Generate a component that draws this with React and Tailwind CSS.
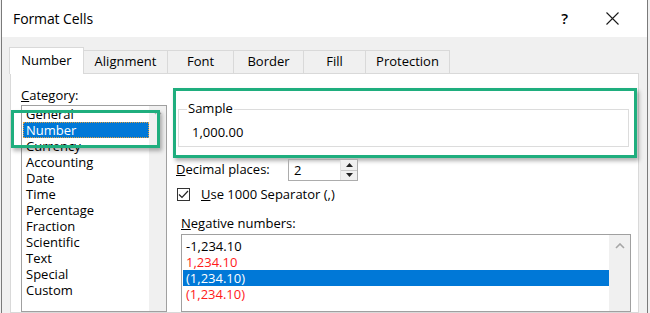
import React from 'react';

const categories = [
  'General', 'Number', 'Currency', 'Accounting', 'Date', 'Time', 'Percentage',
  'Fraction', 'Scientific', 'Text', 'Special', 'Custom',
];

const tabs = ['Alignment', 'Font', 'Border', 'Fill', 'Protection'];
const tabWidths = ['w-[84px]', 'w-[66px]', 'w-[70px]', 'w-[62px]', 'w-[84px]'];

const negatives = [
  { text: '-1,234.10', cls: 'text-black' },
  { text: '1,234.10', cls: 'text-[#ff1a1a]' },
  { text: '(1,234.10)', cls: 'bg-[#0078d7] text-white', selected: true },
  { text: '(1,234.10)', cls: 'text-[#ff1a1a]' },
];

const ChevronUp = () => (
  <svg width="10" height="6" viewBox="0 0 10 6" fill="none">
    <path d="M1 5 L5 1 L9 5" stroke="#a6a6a6" strokeWidth="1.6" />
  </svg>
);

const App = () => {
  return (
    <div
      className="w-[650px] h-[313px] overflow-hidden bg-[#f0f0f0] text-black"
      style={{ fontFamily: '"Open Sans", "Noto Sans", sans-serif' }}
    >
      <div className="relative h-full ml-[1px] w-[647px] border-x border-[#7a7a7a] flex flex-col">

        {/* Title bar */}
        <div className="h-[37px] shrink-0 bg-white flex items-center justify-between pl-[11px] pr-[28px]">
          <span className="text-[14px] tracking-[-0.1px]">Format Cells</span>
          <div className="flex items-center gap-[38px]">
            <span className="text-[15px] font-semibold">?</span>
            <svg width="13" height="13" viewBox="0 0 13 13">
              <path d="M0.5 0.5 L12.5 12.5 M12.5 0.5 L0.5 12.5" stroke="#1a1a1a" strokeWidth="1.1" />
            </svg>
          </div>
        </div>

        {/* Tabs */}
        <div className="flex items-end pl-[7px] pt-[10px] h-[36px] shrink-0 text-[13px]">
          <div className="w-[75px] h-[27px] bg-white border border-b-0 border-[#d9d9d9] flex items-center justify-center relative z-10 -mb-[1px]">
            Number
          </div>
          {tabs.map((t, i) => (
            <div
              key={t}
              className={`${tabWidths[i]} h-[23px] border border-l-0 border-b-0 border-[#d9d9d9] flex items-center justify-center`}
            >
              {t}
            </div>
          ))}
        </div>

        {/* Panel */}
        <div className="flex-1 ml-[8px] mr-[8px] bg-white border border-[#d9d9d9] flex pl-[10px] pt-[13px] text-[13px]">

          {/* Category */}
          <div className="w-[146px] shrink-0 flex flex-col">
            <div className="h-[17px] leading-[17px]"><u>C</u>ategory:</div>
            <div className="mt-[1px] flex-1 border border-[#a0a0a0] flex">
              <div className="flex-1 pl-[1px] flex flex-col leading-[16px]">
                {categories.map((c) => (
                  <div
                    key={c}
                    className={`h-[16px] pl-[3px] ${c === 'Number' ? 'bg-[#0078d7] text-white outline outline-1 outline-dotted outline-[#e0a040] -outline-offset-1' : ''}`}
                  >
                    {c}
                  </div>
                ))}
              </div>
              <div className="w-[17px] bg-[#f0f0f0] flex justify-center pt-[4px]">
                <svg width="8" height="5" viewBox="0 0 8 5"><path d="M1 4 L4 1 L7 4" stroke="#b0b0b0" strokeWidth="1.3" fill="none" /></svg>
              </div>
            </div>
          </div>

          {/* Right side */}
          <div className="flex-1 ml-[6px] flex flex-col pt-[1px]">
            {/* Sample highlight box */}
            <div className="h-[70px] mr-[1px] border-[3px] border-[#1fae7e] shadow-[2px_3px_4px_rgba(0,0,0,0.3)] pl-[2px] pr-[5px] pt-[18px]">
              <div className="relative h-[38px] border border-[#dcdcdc]">
                <span className="absolute -top-[10px] left-[8px] bg-white px-[1px] leading-[17px]">Sample</span>
                <div className="pl-[13px] pt-[14px] leading-[17px]">1,000.00</div>
              </div>
            </div>

            {/* Decimal places */}
            <div className="flex items-center pl-[3px] mt-[1px] h-[22px]">
              <span className="w-[112px]"><u>D</u>ecimal places:</span>
              <div className="w-[70px] h-[22px] border border-[#acacac] flex">
                <span className="flex-1 pl-[5px] leading-[20px]">2</span>
                <div className="w-[17px] flex flex-col border-l border-[#e0e0e0]">
                  <div className="flex-1 bg-[#f0f0f0] border-b border-[#c8c8c8] flex items-center justify-center">
                    <svg width="7" height="4" viewBox="0 0 7 4"><path d="M0 4 L3.5 0 L7 4 Z" fill="#222" /></svg>
                  </div>
                  <div className="flex-1 bg-[#f0f0f0] flex items-center justify-center">
                    <svg width="7" height="4" viewBox="0 0 7 4"><path d="M0 0 L3.5 4 L7 0 Z" fill="#222" /></svg>
                  </div>
                </div>
              </div>
            </div>

            {/* Separator checkbox */}
            <div className="flex items-center pl-[4px] mt-[6px] h-[15px] gap-[11px]">
              <div className="w-[13px] h-[13px] border border-[#333] flex items-center justify-center">
                <svg width="11" height="9" viewBox="0 0 11 9"><path d="M1 4.5 L4 7.5 L10 1" stroke="#222" strokeWidth="1.2" fill="none" /></svg>
              </div>
              <span><u>U</u>se 1000 Separator (,)</span>
            </div>

            {/* Negative numbers */}
            <div className="pl-[8px] mt-[13px] leading-[17px]"><u>N</u>egative numbers:</div>
            <div className="ml-[8px] mr-[7px] mt-[2px] flex-1 border border-[#a0a0a0] flex">
              <div className="flex-1 pl-[1px] pt-[3px] flex flex-col leading-[16px]">
                {negatives.map((n, i) => (
                  <div key={i} className={`h-[16px] pl-[3px] ${n.cls}`}>{n.text}</div>
                ))}
              </div>
              <div className="w-[21px] bg-[#f0f0f0] flex justify-center pt-[8px]">
                <ChevronUp />
              </div>
            </div>
          </div>
        </div>

        {/* Green highlight around selected category */}
        <div className="absolute left-[9px] top-[110px] w-[149px] h-[38px] border-[3px] border-[#1fae7e] shadow-[2px_3px_4px_rgba(0,0,0,0.3)] pointer-events-none" />
      </div>
    </div>
  );
};

export default App;
